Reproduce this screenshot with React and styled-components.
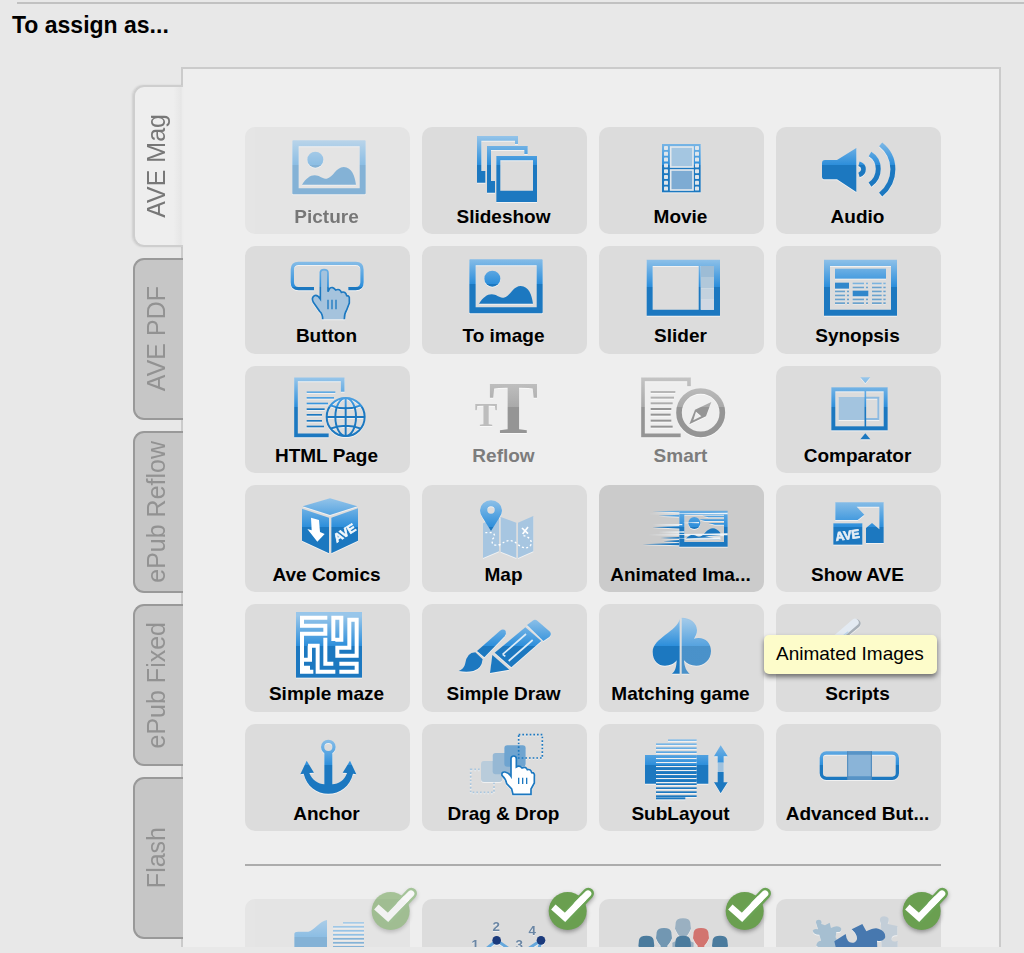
import React, { useState } from "react";
import styled, { createGlobalStyle, css } from "styled-components";

const GlobalStyle = createGlobalStyle`
  *, *::before, *::after { box-sizing: border-box; }
  body {
    margin: 0;
    background: #e8e8e8;
    font-family: "Liberation Sans", Arial, Helvetica, sans-serif;
    color: #000;
  }
`;

const Page = styled.div`
  display: flex;
  flex-direction: column;
  height: 100vh;
  padding-bottom: 6px;
  overflow: hidden;
`;

const Header = styled.header`
  flex: none;
  padding-top: 2px;
  height: 67px;
`;

const TopRule = styled.hr`
  height: 2px;
  margin: 0 0 0 17px;
  border: 0;
  background: #c1c1c1;
`;

const Title = styled.h1`
  margin: 7px 12px 0;
  font-size: 23px;
  line-height: 28px;
  font-weight: bold;
`;

const Body = styled.div`
  flex: 1;
  display: flex;
  min-height: 0;
  padding: 0 23px 0 133px;
`;

const TabList = styled.div`
  flex: none;
  display: flex;
  flex-direction: column;
  gap: 11px;
  width: 50px;
  margin-right: -2px;
  padding-top: 18px;
  z-index: 1;
`;

const Tab = styled.button`
  flex: none;
  display: flex;
  align-items: center;
  justify-content: center;
  height: 162px;
  padding: 0 6px 0 0;
  border: 2px solid #999;
  border-right: 0;
  border-radius: 11px 0 0 11px;
  background: #c6c6c6;
  color: #929292;
  font-family: inherit;
  font-size: 25px;
  line-height: 28px;
  cursor: pointer;

  ${(p) =>
    p.$active &&
    css`
      border-color: #cecece;
      background: linear-gradient(to right, #eee 80%, #e6e6e6 96%, #eee);
      color: #777;
      box-shadow: -1px 0 2px rgba(0, 0, 0, 0.1);
    `}
`;

const TabText = styled.span`
  writing-mode: vertical-rl;
  transform: rotate(180deg);
  white-space: nowrap;
`;

const Panel = styled.main`
  flex: 1;
  min-width: 0;
  overflow: hidden;
  padding: 58px 58px 0 62px;
  border: 2px solid #cbcbcb;
  border-bottom: 0;
  background: #eee;
`;

const Grid = styled.div`
  display: grid;
  grid-template-columns: repeat(4, minmax(0, 1fr));
  grid-auto-rows: 1fr;
  gap: 12px;
  min-height: ${(p) => p.$minHeight}px;
`;

const Cell = styled.div`
  position: relative;
  display: flex;
`;

const Tile = styled.button`
  flex: 1;
  min-width: 0;
  display: flex;
  flex-direction: column;
  align-items: center;
  padding: 0;
  border: 0;
  border-radius: 10px;
  background: ${(p) => (p.$flat ? "transparent" : p.$hot ? "#cbcbcb" : "#dcdcdc")};
  color: ${(p) => (p.$flat ? "#7c7c7c" : "#000")};
  opacity: ${(p) => (p.$faded ? 0.5 : 1)};
  font-family: inherit;
  cursor: pointer;
`;

const TileLabel = styled.span`
  width: 100%;
  padding: 0 10px 0 8px;
  overflow: hidden;
  font-size: 19px;
  line-height: 22px;
  font-weight: bold;
  text-align: center;
  white-space: nowrap;
`;

const ArtSvg = styled.svg`
  flex: none;
  display: block;
  overflow: visible;
  width: 165px;
  height: 79px;
  filter: drop-shadow(0 1px 0 rgba(255, 255, 255, 0.6));
`;

const Divider = styled.hr`
  height: 2px;
  margin: 33px 0;
  border: 0;
  background: #acacac;
`;

const BadgeSvg = styled.svg`
  position: absolute;
  top: -13px;
  right: -8px;
  width: 48px;
  height: 48px;
  opacity: ${(p) => (p.$faded ? 0.55 : 1)};
  filter: drop-shadow(0 2px 2px rgba(0, 0, 0, 0.35));
`;

const Tooltip = styled.div`
  position: absolute;
  top: 150px;
  left: 100%;
  z-index: 2;
  padding: 7px 13px 8px 12px;
  border-radius: 5px;
  background: #fdfcca;
  box-shadow: 0 3px 5px rgba(0, 0, 0, 0.5);
  font-size: 19px;
  line-height: 24px;
  white-space: nowrap;
`;

const Defs = styled.svg`
  position: absolute;
  width: 0;
  height: 0;
`;

const B = "url(#blue)";
const G = "url(#grey)";

function Gradients() {
  const common = { gradientUnits: "userSpaceOnUse", x1: 0, x2: 0, y1: 45, y2: 225 };
  return (
    <Defs aria-hidden="true">
      <defs>
        <linearGradient id="blue" {...common}>
          <stop offset="0" stopColor="#98c6ea" />
          <stop offset="0.5" stopColor="#2c8edb" />
          <stop offset="0.5" stopColor="#1c78c0" />
        </linearGradient>
        <linearGradient id="grey" {...common}>
          <stop offset="0" stopColor="#c4c4c4" />
          <stop offset="0.5" stopColor="#a9a9a9" />
          <stop offset="0.5" stopColor="#959595" />
        </linearGradient>
      </defs>
    </Defs>
  );
}

/* Drawings use three units to a pixel; x and y name the tile's top-left corner. */
function Art({ x, y, children }) {
  return (
    <ArtSvg viewBox={`${x} ${y} 495 237`} fill="none" aria-hidden="true">
      {children}
    </ArtSvg>
  );
}

const SANS = '"Liberation Sans", Arial, sans-serif';

const bars = (list, h = 5) =>
  list.map(([x, y, w], i) => <rect key={i} x={x} y={y} width={w} height={h} fill={B} />);

const PictureArt = () => (
  <Art x={15} y={21}>
    <path fill={B} fillRule="evenodd" d="M160 61H374Q377 61 377 64V220Q377 223 374 223H160Q157 223 157 220V64Q157 61 160 61ZM176 79V205H359V79Z" />
    <circle cx="226" cy="119" r="24" fill={B} />
    <path fill={B} d="M186 194C198 176 210 166 224 166C240 166 246 178 260 176C280 172 288 141 311 141C336 141 345 170 348 194Z" />
  </Art>
);

const SlideshowArt = () => (
  <Art x={546} y={21}>
    <path fill={B} d="M711 48h123v24h-9v-10h-101v91h12v35h-25z" />
    <path fill={B} d="M741 78h122v24h-10v-12h-100v93h12v35h-24z" />
    <path fill={B} fillRule="evenodd" d="M769 108H891V246H769ZM781 121V212H879V121Z" />
  </Art>
);

const MovieArt = () => (
  <Art x={12} y={21}>
    <rect x="201" y="72" width="116" height="145" fill={B} />
    {Array.from({ length: 8 }, (_, i) => (
      <React.Fragment key={i}>
        <rect x="207" y={78 + i * 17.4} width="12" height="12" rx="2" fill="#dfe6ec" />
        <rect x="300" y={78 + i * 17.4} width="12" height="12" rx="2" fill="#dfe6ec" />
      </React.Fragment>
    ))}
    <rect x="227" y="81" width="67" height="60" fill="#a4c6e1" stroke="#e3e8ec" strokeWidth="5" />
    <rect x="227" y="150" width="67" height="60" fill="#7dabd3" stroke="#e3e8ec" strokeWidth="5" />
  </Art>
);

const AudioArt = () => (
  <Art x={543} y={21}>
    <path fill={B} d="M681 129Q681 120 690 120H726L784 84V216L726 178H690Q681 178 681 170Z" />
    <path stroke={B} strokeWidth="14" d="M792 131C810 136 810 160 792 165" />
    <path stroke={B} strokeWidth="15" d="M825 102C858 122 858 172 825 194" />
    <path stroke={B} strokeWidth="15" d="M857 73C906 112 906 182 857 224" />
  </Art>
);

const ButtonArt = () => (
  <Art x={15} y={13}>
    <path stroke={B} strokeWidth="10" d="M222 141H176Q157 141 157 122V84Q157 65 176 65H347Q366 65 366 84V122Q366 141 347 141H325" />
    <path
      fill="#a5c3dd"
      stroke={B}
      strokeWidth="5"
      d="M248 233Q248 216 239 209L220 182Q213 168 223 162Q232 158 241 172V92Q242 84 252 84Q264 84 264 93V150L269 140Q278 133 287 145Q300 140 304 152Q317 148 320 162Q329 162 328 172V184L320 205Q313 215 313 233"
    />
    <path stroke={B} strokeWidth="4" d="M264 174V203M276 174V203M288 174V203" />
  </Art>
);

const SliderArt = () => (
  <Art x={12} y={13}>
    <path fill={B} fillRule="evenodd" d="M155 54H375V222H155ZM173 73V204H311V73ZM317 73V204H357V73Z" />
    <rect x="318" y="73" width="39" height="33" fill="#9dbcd5" />
    <rect x="318" y="106" width="39" height="34" fill="#b1c8da" />
    <rect x="318" y="140" width="39" height="34" fill="#c4d2de" />
    <rect x="318" y="174" width="39" height="30" fill="#d1d8e3" />
  </Art>
);

const SynopsisArt = () => (
  <Art x={543} y={13}>
    <path fill={B} fillRule="evenodd" d="M687 54H906V222H687ZM705 73V204H888V73Z" />
    <rect x="720" y="81" width="153" height="30" fill={B} />
    <rect x="720" y="123" width="42" height="18" fill="#3187cb" />
    <rect x="773" y="147" width="47" height="17" fill="#3187cb" />
    <g opacity="0.6">
      {bars([147, 159, 171, 182].flatMap((y) => [[720, y, 30], [756, y, 6]]))}
      {bars([123, 135, 171, 182].flatMap((y) => [[773, y, 34], [813, y, 6]]))}
      {bars([123, 135, 147, 159, 171, 182].flatMap((y) => [[831, y, 29], [865, y, 7]]))}
    </g>
  </Art>
);

const HtmlArt = () => (
  <Art x={15} y={11}>
    <path stroke={B} strokeWidth="11" d="M308 88V51H168V219H266" />
    {bars([[200, 87, 86], [200, 104, 82], [200, 121, 64], [200, 138, 54], [200, 155, 46], [200, 173, 46], [200, 190, 52]])}
    <g stroke={B} strokeWidth="6">
      <circle cx="317" cy="164" r="57" />
      <ellipse cx="317" cy="164" rx="31" ry="57" />
      <path d="M317 107V221M260 164H374M271 129Q317 147 363 129M271 199Q317 181 363 199" />
    </g>
  </Art>
);

const ReflowArt = () => (
  <Art x={546} y={11}>
    <g fontFamily='"Liberation Serif", "Times New Roman", serif' fontWeight="bold" textAnchor="middle">
      <text x="820" y="212" fontSize="222" fill={G}>T</text>
      <text x="738" y="190" fontSize="102" fill="#bdbdbd">T</text>
    </g>
  </Art>
);

const SmartArt = () => (
  <Art x={1077} y={11}>
    <path stroke={G} strokeWidth="11" d="M1347 72V51H1209V219H1322" />
    {[[89, 74], [106, 70], [123, 66], [140, 62], [157, 60], [175, 62], [193, 66]].map(([y, w]) => (
      <rect key={y} x="1232" y={y - 3} width={w} height="6" fill={G} />
    ))}
    <circle cx="1382" cy="151" r="65" stroke={G} strokeWidth="17" />
    <path fill={G} fillRule="evenodd" d="M1414 119L1398 162L1348 186L1365 142ZM1368 148L1360 174L1384 162Z" />
  </Art>
);

const ComparatorArt = () => (
  <Art x={1608} y={11}>
    <rect x="1780" y="81" width="157" height="117" stroke={B} strokeWidth="12" />
    <rect x="1796" y="104" width="79" height="69" fill="#a3c4df" />
    <path stroke="#8dbae0" strokeWidth="6" d="M1878 106H1915V170H1878" />
    <path stroke={B} strokeWidth="5" d="M1876 81V198" />
    <path fill={B} d="M1861 45H1891L1876 63ZM1861 231H1891L1876 213Z" />
  </Art>
);

const ComicsArt = () => (
  <Art x={15} y={9}>
    <path fill={B} d="M188 73L270 49L352 73L270 99ZM186 80L267 107V214L186 176ZM274 107L354 79V176L274 214Z" />
    <path fill="#fff" d="M213 107L237 114L240 150L254 156L232 179L202 141L215 145Z" />
    <text
      transform="translate(290 182) rotate(-32)"
      fill="#f3f8fc"
      stroke="#f3f8fc"
      strokeWidth="2"
      fontFamily={SANS}
      fontWeight="bold"
      fontSize="36"
    >
      AVE
    </text>
  </Art>
);

const MapArt = () => (
  <Art x={546} y={9}>
    <path fill="#a7c6e1" d="M729 124L777 105V208L729 228ZM782 105L829 122V228L782 209ZM834 122L880 102V208L834 228Z" />
    <path stroke="#fff" strokeWidth="4" strokeDasharray="6 7" d="M736 152H757Q770 160 757 172Q752 196 782 187Q812 164 834 188Q858 206 872 190Q880 168 848 160" />
    <path stroke="#fff" strokeWidth="5" d="M846 138L864 155M864 135L848 156" />
    <path fill={B} fillRule="evenodd" d="M753 147L728 107Q720 96 720 86A33 31 0 0 1 786 86Q786 96 778 107ZM753 73A11 11 0 0 0 753 95A11 11 0 0 0 753 73Z" />
  </Art>
);

const AnimatedArt = () => (
  <Art x={12} y={9}>
    <path fill={B} fillRule="evenodd" d="M253 86H398V194H253ZM268 98V180H387V98Z" />
    <circle cx="298" cy="123" r="18" fill={B} />
    <path fill={B} d="M272 171C284 158 292 156 300 160C312 168 320 164 330 152C346 134 362 134 376 152V160L330 163L376 172Z" />
    <path fill={B} d="M172 88L253 86V91ZM190 101L253 98V104ZM172 136L266 132V140ZM196 168L253 165V171ZM205 178L253 174V181ZM143 187L253 183V190Z" />
    <path fill={B} d="M322 101H387V106H340ZM312 112H387V117H330ZM340 123H387V128H360Z" />
    <path fill="#eef4f8" d="M160 95L398 92V97ZM172 128L262 126V130ZM262 122L312 120V124ZM160 158L398 154V160ZM190 150L268 148V152ZM225 170L376 166V171Z" />
  </Art>
);

const ShowAveArt = () => (
  <Art x={543} y={9}>
    <path fill={B} d="M721 61H866V183H813V138L831 123L853 142V74H785L808 98L788 114H721Z" />
    <rect x="715" y="124" width="87" height="64" fill={B} />
    <text
      transform="translate(723 177) rotate(-8)"
      fill="#e6eef5"
      stroke="#e6eef5"
      strokeWidth="2"
      fontFamily={SANS}
      fontWeight="bold"
      fontSize="37"
    >
      AVE
    </text>
  </Art>
);

const MazeArt = () => (
  <Art x={15} y={9}>
    <rect x="168" y="33" width="198" height="197" fill={B} />
    <path
      stroke="#fff"
      strokeWidth="12"
      d="M262 50H186V74H256V98H186V212H220M186 176H210V134H233V212H286M209 176V134M256 110V188H280M280 120V50H304V116H286M328 50V140H292V164H350V56H322M298 188H350V212H298M192 200H204V212"
    />
  </Art>
);

const DrawArt = () => (
  <Art x={546} y={9}>
    <path fill={B} d="M656 210Q672 204 675 190Q680 154 706 154L728 175Q725 204 700 210Q680 214 656 210Z" />
    <path fill={B} d="M711 150L780 89Q790 82 797 90Q800 98 794 106L733 169Z" />
    <path fill={B} d="M750 216L757 162L808 206Z" />
    <path fill={B} d="M764 155L856 79L904 120L814 199Z" />
    <path fill={B} d="M861 72L878 59Q885 54 892 59L930 92Q936 100 928 108L910 120Z" />
    <path stroke="#dcebf6" strokeWidth="5" d="M788 160L858 99M806 180L878 117M788 160L796 166" />
  </Art>
);

const MatchingArt = () => (
  <Art x={12} y={9}>
    <path fill={B} d="M254 54C248 90 173 112 173 152C173 180 190 194 210 194C225 194 238 188 245 178C244 200 240 212 231 218H254Z" />
    <path fill={B} opacity="0.78" d="M260 50C286 50 306 66 306 88C306 98 302 106 297 113C325 105 348 122 348 150C348 178 326 194 304 194C288 194 275 188 267 178C268 198 275 212 284 218H260Z" />
  </Art>
);

const ScriptsArt = () => (
  <Art x={543} y={9}>
    <path stroke="#a8b0b8" strokeWidth="26" strokeLinecap="round" d="M784 68L730 112" />
    <path stroke="#e3eaf2" strokeWidth="22" strokeLinecap="round" d="M780 64L726 110" />
    <path stroke="#bcd5ea" strokeWidth="4" d="M760 92L722 122" />
  </Art>
);

const AnchorArt = () => (
  <Art x={15} y={11}>
    <circle cx="265" cy="80" r="17" stroke={B} strokeWidth="10" />
    <rect x="253" y="97" width="24" height="100" fill={B} />
    <path fill={B} d="M181 162L200 121L222 157L208 158C216 180 236 191 253 192H277C296 191 314 180 321 158L308 157L330 121L349 162L339 160C330 198 300 220 265 220C230 220 200 198 191 160Z" />
  </Art>
);

const DragArt = () => (
  <Art x={546} y={11}>
    <rect x="692" y="147" width="70" height="69" stroke="#a9c6de" strokeWidth="5" strokeDasharray="5 6" />
    <rect x="723" y="122" width="64" height="63" rx="9" fill="#b9ccdb" />
    <rect x="758" y="98" width="64" height="64" rx="9" fill="#96b8d4" />
    <rect x="793" y="75" width="64" height="64" rx="9" fill="#6ea4d0" />
    <rect x="836" y="43" width="71" height="70" stroke="#1c78c0" strokeWidth="5" strokeDasharray="5 6" />
    <path
      fill="#fff"
      stroke="#1c78c0"
      strokeWidth="5"
      d="M813 168V114Q814 107 821 107Q829 107 829 115V140Q838 134 846 143Q856 137 862 148Q872 145 875 157Q885 156 883 170V188L873 206V222H819L815 206L800 190Q798 176 786 165Q784 154 795 155Q806 157 813 168Z"
    />
    <path stroke="#1c78c0" strokeWidth="4" d="M836 172V191M848 172V191M860 172V191" />
  </Art>
);

const SubLayoutArt = () => (
  <Art x={12} y={11}>
    <path fill={B} d="M150 104H183V190H150ZM305 104H340V190H305Z" />
    {bars([[219, 57, 86], ...Array.from({ length: 14 }, (_, i) => [183, 69 + i * 12, 122])])}
    {bars([105, 117, 129, 141, 153, 165, 177].map((y) => [183, y, 122]), 8)}
    {bars([[183, 231, 88]], 6)}
    <path fill={B} d="M377 75L398 108H386V127H368V108H357ZM368 155H386V186H398L377 219L357 186H368Z" />
    <rect x="368" y="127" width="18" height="28" fill="#a0c2de" />
  </Art>
);

const AdvancedArt = () => (
  <Art x={543} y={11}>
    <rect x="679" y="98" width="228" height="76" rx="15" stroke={B} strokeWidth="10" />
    <rect x="757" y="93" width="74" height="86" fill="#8ab4d8" />
    <path fill="#5793c6" d="M757 93H831V103H757ZM757 168H831V179H757Z" />
    <path stroke="#4a86ba" strokeWidth="3" d="M758 93V179M829 93V179" />
  </Art>
);

const EbookArt = () => (
  <Art x={15} y={21}>
    <path fill={B} d="M163 126Q163 119 175 119H205C222 116 240 86 261 84V240H163Z" />
    {bars([[309, 90, 63], ...[102, 114, 126, 138, 150, 162, 174, 186].map((y) => [279, y, 93])])}
  </Art>
);

const DotsArt = () => (
  <Art x={546} y={21}>
    <path stroke="#66a8dc" strokeWidth="9" d="M715 190L770 145L835 190L903 145L890 200" />
    <circle cx="770" cy="145" r="13" fill="#1b3a7c" />
    <circle cx="903" cy="145" r="13" fill="#1b3a7c" />
    <g fill="#6a86a4" fontFamily={SANS} fontWeight="bold" fontSize="40" textAnchor="middle">
      <text x="769" y="118">2</text>
      <text x="877" y="130">4</text>
      <text x="706" y="172">1</text>
      <text x="838" y="172">3</text>
    </g>
  </Art>
);

const Person = ({ x, y, color }) => (
  <path
    fill={color}
    d={`M${x - 22} ${y - 14}Q${x - 20} ${y - 27} ${x} ${y - 27}Q${x + 20} ${y - 27} ${x + 22} ${y - 14}L${x + 24} ${y + 4}Q${x + 16} ${y + 22} ${x + 10} ${y + 26}V${y + 36}L${x + 32} ${y + 46}V${y + 110}H${x - 32}V${y + 46}L${x - 10} ${y + 36}V${y + 26}Q${x - 16} ${y + 22} ${x - 24} ${y + 4}Z`}
  />
);

const PeopleArt = () => (
  <Art x={12} y={21}>
    <Person x={264} y={106} color="#9ab0c1" />
    <Person x={207} y={135} color="#7297b2" />
    <Person x={318} y={135} color="#d2746f" />
    <Person x={154} y={158} color="#4b7b9d" />
    <Person x={264} y={158} color="#4b7b9d" />
    <Person x={375} y={158} color="#4b7b9d" />
  </Art>
);

const PuzzleArt = () => (
  <Art x={543} y={21}>
    <path fill="#a6bfd1" d="M663 92Q662 83 672 83Q682 84 679 96L690 100L704 92L708 108Q728 98 738 108Q742 122 724 120L722 136L736 166H672L664 162Q664 148 678 146L673 128Q656 128 653 116Q657 108 669 112Z" />
    <path fill="#c3ced8" d="M858 96Q848 74 868 73Q888 75 878 96L907 102V130Q888 128 890 144Q894 152 908 146V200H860Z" />
    <path fill="#4778af" d="M718 148L752 126Q756 156 776 152Q794 144 780 122L770 112L802 96L814 118Q838 106 850 110Q874 118 870 138Q862 150 846 146L850 240H740Z" />
  </Art>
);

function DoneBadge({ faded }) {
  return (
    <BadgeSvg viewBox="390 498 144 144" $faded={faded} fill="none" role="img" aria-label="Installed">
      <circle cx="452" cy="573" r="57" fill="#6a9f50" />
      <path stroke="#6aa354" strokeWidth="34" strokeLinecap="round" d="M446 592L514 520" />
      <path stroke="#fff" strokeWidth="20" d="M409 561L444 592L500 534" />
      <path stroke="#fff" strokeWidth="20" strokeLinecap="round" d="M480 554L513 521" />
    </BadgeSvg>
  );
}

const TOOLS = [
  { label: "Picture", art: PictureArt, faded: true },
  { label: "Slideshow", art: SlideshowArt },
  { label: "Movie", art: MovieArt },
  { label: "Audio", art: AudioArt },
  { label: "Button", art: ButtonArt },
  { label: "To image", art: PictureArt },
  { label: "Slider", art: SliderArt },
  { label: "Synopsis", art: SynopsisArt },
  { label: "HTML Page", art: HtmlArt },
  { label: "Reflow", art: ReflowArt, flat: true },
  { label: "Smart", art: SmartArt, flat: true },
  { label: "Comparator", art: ComparatorArt },
  { label: "Ave Comics", art: ComicsArt },
  { label: "Map", art: MapArt },
  { label: "Animated Ima...", art: AnimatedArt, hot: true, tip: "Animated Images" },
  { label: "Show AVE", art: ShowAveArt },
  { label: "Simple maze", art: MazeArt },
  { label: "Simple Draw", art: DrawArt },
  { label: "Matching game", art: MatchingArt },
  { label: "Scripts", art: ScriptsArt },
  { label: "Anchor", art: AnchorArt },
  { label: "Drag & Drop", art: DragArt },
  { label: "SubLayout", art: SubLayoutArt },
  { label: "Advanced But...", art: AdvancedArt },
];

const EXTRAS = [
  { id: "ebook", art: EbookArt, faded: true },
  { id: "dots", art: DotsArt },
  { id: "people", art: PeopleArt },
  { id: "puzzle", art: PuzzleArt },
];

const TABS = ["AVE Mag", "AVE PDF", "ePub Reflow", "ePub Fixed", "Flash"];

export default function App() {
  const [active, setActive] = useState("AVE Mag");
  return (
    <Page>
      <GlobalStyle />
      <Gradients />
      <Header>
        <TopRule />
        <Title>To assign as...</Title>
      </Header>
      <Body>
        <TabList role="tablist" aria-orientation="vertical">
          {TABS.map((name) => (
            <Tab key={name} role="tab" aria-selected={name === active} $active={name === active} onClick={() => setActive(name)}>
              <TabText>{name}</TabText>
            </Tab>
          ))}
        </TabList>
        <Panel>
          <Grid $minHeight={704}>
            {TOOLS.map(({ label, art: Drawing, faded, flat, hot, tip }) => (
              <Cell key={label}>
                <Tile $faded={faded} $flat={flat} $hot={hot}>
                  <Drawing />
                  <TileLabel>{label}</TileLabel>
                </Tile>
                {tip && <Tooltip role="tooltip">{tip}</Tooltip>}
              </Cell>
            ))}
          </Grid>
          <Divider />
          <Grid $minHeight={107}>
            {EXTRAS.map(({ id, art: Drawing, faded }) => (
              <Cell key={id}>
                <Tile $faded={faded} aria-label={id}>
                  <Drawing />
                </Tile>
                <DoneBadge faded={faded} />
              </Cell>
            ))}
          </Grid>
        </Panel>
      </Body>
    </Page>
  );
}
